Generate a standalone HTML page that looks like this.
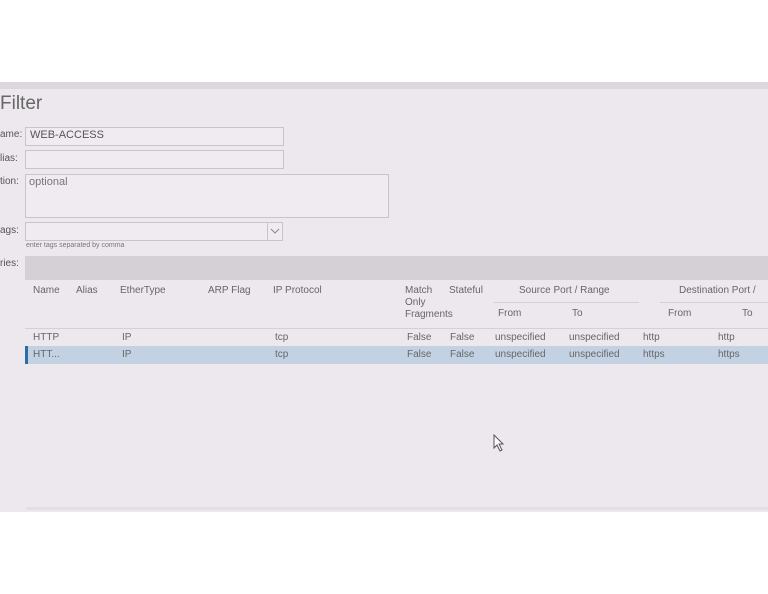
<!DOCTYPE html>
<html><head><style>
body{margin:0;width:768px;height:594px;background:#fff;position:relative;overflow:hidden;font-family:"Liberation Sans",sans-serif;color:#555}
.p{position:absolute;left:0;top:82px;width:768px;height:430px;background:#ede8ee}
.band{position:absolute;left:0;top:82px;width:768px;height:7px;background:#dcd7dd}
.a{position:absolute;white-space:nowrap}
.lbl{font-size:10px;color:#555}
.in{position:absolute;border:1px solid #c9c4ca;background:#efebf0;box-sizing:border-box}
.t{font-size:10px;color:#666}
</style></head><body>
<div class="p"></div><div class="band"></div>
<div class="a" style="left:0;top:93px;font-size:19px;color:#666">Filter</div>
<div class="a lbl" style="left:0;top:129px">ame:</div>
<div class="in" style="left:25px;top:127px;width:259px;height:19px"></div>
<div class="a" style="left:30px;top:129px;font-size:11px;color:#555">WEB-ACCESS</div>
<div class="a lbl" style="left:0;top:153px">lias:</div>
<div class="in" style="left:25px;top:150px;width:259px;height:19px"></div>
<div class="a lbl" style="left:0;top:176px">tion:</div>
<div class="in" style="left:25px;top:174px;width:364px;height:44px"></div>
<div class="a" style="left:29px;top:176px;font-size:11px;color:#777">optional</div>
<div class="a lbl" style="left:0;top:225px">ags:</div>
<div class="in" style="left:25px;top:222px;width:258px;height:19px"></div>
<div class="a" style="left:267px;top:223px;width:1px;height:17px;background:#c9c4ca"></div>
<svg class="a" style="left:270px;top:228px" width="10" height="7"><path d="M1 1L5 5L9 1" stroke="#888" fill="none"/></svg>
<div class="a" style="left:26px;top:242px;font-size:7px;color:#777">enter tags separated by comma</div>
<div class="a lbl" style="left:0;top:258px">ries:</div>
<div class="a" style="left:25px;top:256px;width:743px;height:24px;background:#d5d0d6"></div>
<div class="a t" style="left:33px;top:285px">Name</div>
<div class="a t" style="left:76px;top:285px">Alias</div>
<div class="a t" style="left:120px;top:285px">EtherType</div>
<div class="a t" style="left:208px;top:285px">ARP Flag</div>
<div class="a t" style="left:273px;top:285px">IP Protocol</div>
<div class="a t" style="left:405px;top:285px;line-height:12px">Match<br>Only<br>Fragments</div>
<div class="a t" style="left:449px;top:285px">Stateful</div>
<div class="a t" style="left:519px;top:285px">Source Port / Range</div>
<div class="a" style="left:494px;top:302px;width:145px;height:1px;background:#d5d0d6"></div>
<div class="a t" style="left:679px;top:285px">Destination Port /</div>
<div class="a" style="left:660px;top:302px;width:108px;height:1px;background:#d5d0d6"></div>
<div class="a t" style="left:498px;top:308px">From</div>
<div class="a t" style="left:572px;top:308px">To</div>
<div class="a t" style="left:668px;top:308px">From</div>
<div class="a t" style="left:742px;top:308px">To</div>
<div class="a" style="left:25px;top:328px;width:743px;height:1px;background:#d5d0d6"></div>
<div class="a" style="left:25px;top:346px;width:743px;height:18px;background:#c3d2e3"></div>
<div class="a" style="left:25px;top:346px;width:3px;height:18px;background:#2a6ea6"></div>
<div class="a t" style="left:33px;top:332px">HTTP</div><div class="a t" style="left:122px;top:332px">IP</div><div class="a t" style="left:275px;top:332px">tcp</div><div class="a t" style="left:407px;top:332px">False</div><div class="a t" style="left:450px;top:332px">False</div><div class="a t" style="left:495px;top:332px">unspecified</div><div class="a t" style="left:569px;top:332px">unspecified</div><div class="a t" style="left:643px;top:332px">http</div><div class="a t" style="left:718px;top:332px">http</div>
<div class="a t" style="left:33px;top:349px">HTT...</div><div class="a t" style="left:122px;top:349px">IP</div><div class="a t" style="left:275px;top:349px">tcp</div><div class="a t" style="left:407px;top:349px">False</div><div class="a t" style="left:450px;top:349px">False</div><div class="a t" style="left:495px;top:349px">unspecified</div><div class="a t" style="left:569px;top:349px">unspecified</div><div class="a t" style="left:643px;top:349px">https</div><div class="a t" style="left:718px;top:349px">https</div>
<svg class="a" style="left:493px;top:434px" width="12" height="18"><path d="M1 1L1 14L4 11L7 17L9 16L6 10L10 10Z" fill="#fff" stroke="#555"/></svg>
<div class="a" style="left:26px;top:507px;width:742px;height:3px;background:#e3dee4"></div>
</body></html>
